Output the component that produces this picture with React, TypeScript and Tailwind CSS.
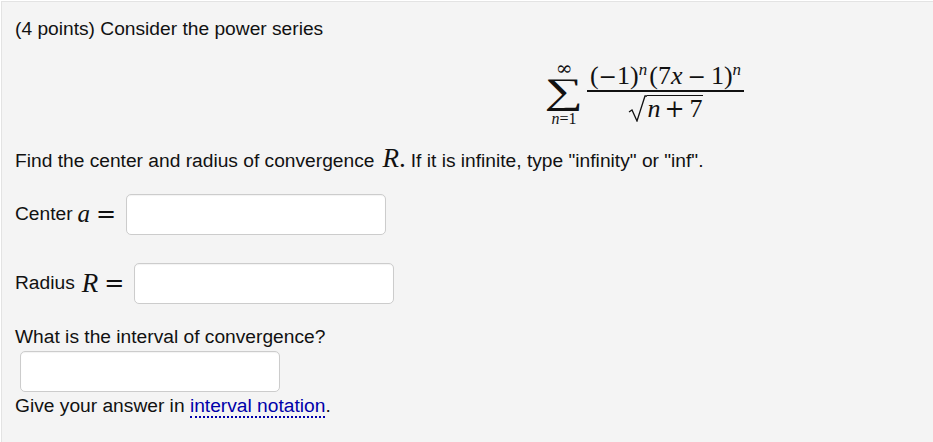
const serif = "font-['Liberation_Serif',serif]";
const op = "font-['DejaVu_Serif',serif]";

function Field({ className = "" }: { className?: string }) {
  return <div className={`h-[41px] w-[260px] shrink-0 rounded-[5px] border border-[#cccccc] bg-white shadow-[inset_0_1px_1px_rgba(0,0,0,0.05)] ${className}`} />;
}

function Sup() {
  return <sup className="relative top-[-9px] align-baseline text-[17px] italic leading-none">n</sup>;
}

export default function App() {
  return (
    <div className="h-[442px] w-[933px] overflow-hidden bg-white pl-px pt-px">
      <div className="h-full border-l border-t border-[#e3e3e3] bg-[#f4f4f4] pl-[13px] pt-[15px] font-['Liberation_Sans',sans-serif] text-[19.2px] leading-[24px] text-[#111111]">
        <p>(4 points) Consider the power series</p>

        <div className={`ml-[533px] mt-[20px] flex h-[80px] items-start ${serif}`}>
          <div className="flex w-[32px] flex-col items-center">
            <span className={`h-[14px] text-[20px] leading-[14px] ${op}`}>∞</span>
            <span className="h-[37px] origin-center scale-x-[1.5] text-[36px] leading-[32px]">∑</span>
            <span className="h-[14px] text-[16px] leading-[14px]"><i>n</i>=1</span>
          </div>
          <div className="ml-[7px] flex w-[157px] flex-col items-center">
            <div className="mt-[1px] h-[28px] whitespace-nowrap text-[26px] leading-[28px]">
              (<span className={`text-[22px] ${op}`}>−</span>1)<Sup /><span className="ml-[2px]">(</span>7<i>x</i><span className={`mx-[5px] text-[22px] ${op}`}>−</span>1)<Sup />
            </div>
            <div className="h-[2px] w-full bg-[#111111]" />
            <div className="mt-[3px] flex items-start">
              <svg width="19" height="27" viewBox="0 0 19 27" className="shrink-0">
                <path d="M1 17 L4 15 L9 26 L17 1 H19" fill="none" stroke="#111111" strokeWidth="1.3" />
              </svg>
              <div className="border-t border-[#111111] text-[26px] leading-[25px]">
                <i>n</i><span className={`ml-[4px] mr-[5px] text-[24px] ${op}`}>+</span>7
              </div>
            </div>
          </div>
        </div>

        <p className="mt-[8px]">
          Find the center and radius of convergence
          <span className={`ml-[8px] text-[27px] italic leading-[0] ${serif}`}>R</span>
          <span className={`text-[27px] leading-[0] ${serif}`}>.</span>
          <span className="ml-[5px]">If it is infinite, type "infinity" or "inf".</span>
        </p>

        <div className="mt-[21px] flex items-center">
          <div className="flex items-center pb-[2px]">
            <span>Center</span>
            <span className={`ml-[5px] text-[25px] italic ${serif}`}>a</span>
            <span className={`ml-[6px] text-[24px] ${op}`}>=</span>
          </div>
          <Field className="ml-[10px]" />
        </div>

        <div className="mt-[28px] flex items-center">
          <div className="flex items-center pb-[2px]">
            <span>Radius</span>
            <span className={`ml-[7px] text-[27px] italic ${serif}`}>R</span>
            <span className={`ml-[6px] text-[24px] ${op}`}>=</span>
          </div>
          <Field className="ml-[10px]" />
        </div>

        <p className="mt-[21px]">What is the interval of convergence?</p>
        <Field className="ml-[5px] mt-[2px]" />
        <p className="mt-[2px]">
          Give your answer in{" "}
          <span className="border-b-[2px] border-dotted border-[#0000aa] text-[#0000aa]">interval notation</span>.
        </p>
      </div>
    </div>
  );
}
